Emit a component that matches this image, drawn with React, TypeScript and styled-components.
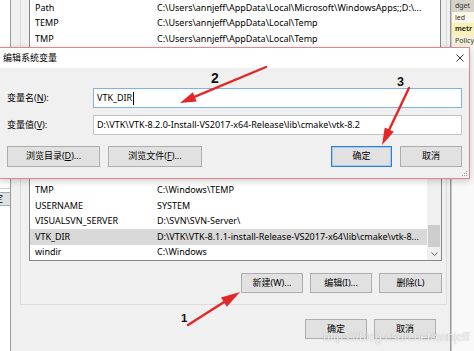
import React from "react";
import styled, { createGlobalStyle } from "styled-components";

const UI_FONT = `"Noto Sans", "Noto Sans CJK SC", sans-serif`;

const GlobalStyle = createGlobalStyle`
  * { box-sizing: border-box; }
  html, body { margin: 0; padding: 0; background: #f7f7f7; }
`;

const Desktop = styled.div`
  position: relative;
  width: 474px;
  height: 351px;
  overflow: hidden;
  background: #f7f7f7;
  font-family: ${UI_FONT};
  font-size: 9px;
  line-height: 1.2;
  color: #000;
`;

/* ---------- windows lying behind ---------- */

const LeftWindow = styled.div`
  position: absolute;
  top: 0;
  left: -60px;
  width: 74px;
  height: 351px;
  background: #fff;
  display: flex;
  flex-direction: column;
`;

const LeftFooter = styled.div`
  margin-top: 188px;
  border-top: 1px solid #d0d0d0;
  display: flex;
  justify-content: flex-end;
  padding: 3px 0 0;
`;

const PartButton = styled.div`
  width: 40px;
  height: 14px;
  background: #e1e1e1;
  border: 1px solid #adadad;
  display: flex;
  align-items: center;
  justify-content: center;
`;

const RightWindow = styled.div`
  position: absolute;
  top: 0;
  left: 451px;
  width: 30px;
  height: 351px;
  background: #f9f9f9;
  border-left: 1px solid #c8c8c8;
  display: flex;
  flex-direction: column;
`;

const PropLine = styled.div<{ $bg: string; $bold?: boolean }>`
  height: 11.5px;
  padding-left: 3px;
  background: ${(p) => p.$bg};
  font-size: 7px;
  line-height: 11.5px;
  font-weight: ${(p) => (p.$bold ? 700 : 400)};
  color: #333;
  white-space: nowrap;
`;

/* ---------- environment variables window ---------- */

const EnvWindow = styled.div`
  position: absolute;
  left: 10px;
  top: 0;
  width: 441px;
  height: 400px;
  background: #f0f0f0;
  border-left: 1px solid #9a9a9a;
  border-right: 1px solid #9a9a9a;
  display: flex;
  flex-direction: column;
`;

const GroupBox = styled.div<{ $open?: boolean }>`
  margin: ${(p) => (p.$open ? 0 : 17)}px 3px 0 9px;
  border: 1px solid #dcdcdc;
  border-top: ${(p) => (p.$open ? "none" : "1px solid #dcdcdc")};
  padding: ${(p) => (p.$open ? "0 4px 37px 8px" : "20px 4px 11px 8px")};
  display: flex;
  flex-direction: column;
`;

const VarList = styled.div<{ $h: number; $w?: string; $open?: boolean }>`
  height: ${(p) => p.$h}px;
  width: ${(p) => p.$w || "auto"};
  border: 1px solid #828790;
  border-top: ${(p) => (p.$open ? "none" : "1px solid #828790")};
  background: #fff;
  display: flex;
`;

const ListBody = styled.div`
  flex: 1;
  display: flex;
  flex-direction: column;
  min-width: 0;
`;

const ListHeader = styled.div`
  height: 20px;
  flex: none;
  border-bottom: 1px solid #e5e5e5;
`;

const Row = styled.div<{ $selected?: boolean }>`
  height: 15.5px;
  flex: none;
  display: flex;
  align-items: center;
  line-height: 12px;
  background: ${(p) => (p.$selected ? "#d9d9d9" : "transparent")};
  white-space: nowrap;
`;

const NameCell = styled.div`
  width: 127px;
  flex: none;
  padding-left: 5px;
`;

const ValueCell = styled.div`
  flex: 1;
`;

const ScrollBar = styled.div`
  width: 14px;
  flex: none;
  background: #f0f0f0;
  display: flex;
  flex-direction: column;
`;

const ScrollArrow = styled.div`
  height: 13px;
  flex: none;
  display: flex;
  align-items: center;
  justify-content: center;
`;

const ScrollTrack = styled.div`
  flex: 1;
  display: flex;
  flex-direction: column;
  justify-content: flex-end;
  padding: 0 1px;
`;

const Thumb = styled.div`
  height: 22px;
  background: #cdcdcd;
`;

const ButtonRow = styled.div<{ $top: number; $right?: number }>`
  display: flex;
  justify-content: flex-end;
  gap: 7px;
  margin-top: ${(p) => p.$top}px;
  padding-right: ${(p) => p.$right || 0}px;
`;

const Button = styled.div<{ $w: number; $h?: number; $default?: boolean }>`
  width: ${(p) => p.$w}px;
  height: ${(p) => p.$h || 20}px;
  flex: none;
  background: #e1e1e1;
  border: 1px solid ${(p) => (p.$default ? "#2b7fd5" : "#adadad")};
  box-shadow: ${(p) => (p.$default ? "inset 0 0 0 1px #a7c9ec" : "none")};
  display: flex;
  align-items: center;
  justify-content: center;
  white-space: nowrap;
`;

/* ---------- edit dialog ---------- */

const Dialog = styled.div`
  position: absolute;
  left: -1px;
  top: 47px;
  width: 471px;
  height: 132px;
  border: 1px solid #d98a8e;
  box-shadow: 0 2px 7px rgba(0, 0, 0, 0.2);
  background: #f0f0f0;
  display: flex;
  flex-direction: column;
`;

const TitleBar = styled.div`
  height: 20px;
  flex: none;
  background: #fff;
  display: flex;
  align-items: center;
  justify-content: space-between;
  padding: 0 5px 0 3px;
`;

const DialogBody = styled.div`
  flex: 1;
  padding: 20px 7px 0 7px;
  display: flex;
  flex-direction: column;
`;

const FieldRow = styled.div<{ $top?: number }>`
  display: flex;
  align-items: center;
  margin-top: ${(p) => p.$top || 0}px;
`;

const FieldLabel = styled.div`
  width: 86px;
  flex: none;
`;

const TextBox = styled.div<{ $focused?: boolean }>`
  flex: 1;
  height: 20px;
  background: #fff;
  border: 1px solid ${(p) => (p.$focused ? "#7fb2e5" : "#c4c4c4")};
  padding-left: 3px;
  display: flex;
  align-items: center;
  white-space: nowrap;
`;

const Caret = styled.span`
  width: 1px;
  height: 13px;
  margin-left: 1px;
  background: #000;
`;

const DialogButtons = styled.div`
  display: flex;
  justify-content: space-between;
  margin-top: 11px;
`;

const ButtonGroup = styled.div`
  display: flex;
  gap: 8px;
`;

const Grip = styled.svg`
  position: absolute;
  right: 1px;
  bottom: 1px;
`;

/* ---------- annotations ---------- */

const Overlay = styled.svg`
  position: absolute;
  left: 0;
  top: 0;
  pointer-events: none;
`;

const Mark = styled.span<{ $x: number; $y: number; $size: number }>`
  position: absolute;
  left: ${(p) => p.$x}px;
  top: ${(p) => p.$y}px;
  font-family: "Liberation Sans", Arial, sans-serif;
  font-weight: 700;
  font-size: ${(p) => p.$size}px;
  line-height: 1;
  color: #111;
`;

const Watermark = styled.span`
  position: absolute;
  left: 323px;
  top: 330px;
  font-family: "Liberation Sans", Arial, sans-serif;
  font-size: 12px;
  color: rgba(255, 255, 255, 0.85);
  text-shadow: 0 0 1px rgba(0, 0, 0, 0.35);
  white-space: nowrap;
`;

const Arrow: React.FC<{ x1: number; y1: number; x2: number; y2: number; len?: number; half?: number }> = ({
  x1,
  y1,
  x2,
  y2,
  len = 16,
  half = 5,
}) => {
  const dx = x2 - x1;
  const dy = y2 - y1;
  const d = Math.hypot(dx, dy);
  const ux = dx / d;
  const uy = dy / d;
  const bx = x2 - ux * len;
  const by = y2 - uy * len;
  const nx = -uy;
  const ny = ux;
  const pts = `${x2},${y2} ${bx + nx * half},${by + ny * half} ${bx - nx * half},${by - ny * half}`;
  return (
    <g>
      <line x1={x1} y1={y1} x2={bx + ux * 3} y2={by + uy * 3} stroke="#e32727" strokeWidth={2.4} strokeLinecap="round" />
      <polygon points={pts} fill="#e32727" />
    </g>
  );
};

// only the rows that show above the dialog
const userVars: [string, string][] = [
  ["Path", "C:\\Users\\annjeff\\AppData\\Local\\Microsoft\\WindowsApps;;D:\\..."],
  ["TEMP", "C:\\Users\\annjeff\\AppData\\Local\\Temp"],
  ["TMP", "C:\\Users\\annjeff\\AppData\\Local\\Temp"],
];

const sysVars: [string, string][] = [
  ["", ""],
  ["TMP", "C:\\Windows\\TEMP"],
  ["USERNAME", "SYSTEM"],
  ["VISUALSVN_SERVER", "D:\\SVN\\SVN-Server\\"],
  ["VTK_DIR", "D:\\VTK\\VTK-8.1.1-install-Release-VS2017-x64\\lib\\cmake\\vtk-8..."],
  ["windir", "C:\\Windows"],
];

export default function App() {
  return (
    <Desktop>
      <GlobalStyle />

      <LeftWindow>
        <LeftFooter>
          <PartButton>确定</PartButton>
        </LeftFooter>
      </LeftWindow>

      <RightWindow>
        <PropLine $bg="#d6d3c9">dget</PropLine>
        <PropLine $bg="#fbf8ea">led</PropLine>
        <PropLine $bg="#fbf1b4" $bold>metr</PropLine>
        <PropLine $bg="#f6f0d8">Policy</PropLine>
      </RightWindow>

      <EnvWindow>
        <GroupBox $open>
          <VarList $h={70} $w="412px" $open>
            <ListBody>
              {userVars.map(([n, v]) => (
                <Row key={n}>
                  <NameCell>{n}</NameCell>
                  <ValueCell>{v}</ValueCell>
                </Row>
              ))}
            </ListBody>
          </VarList>
        </GroupBox>

        <GroupBox>
          <VarList $h={115}>
            <ListBody>
              <ListHeader />
              {sysVars.map(([n, v], i) => (
                <Row key={i} $selected={n === "VTK_DIR"}>
                  <NameCell>{n}</NameCell>
                  <ValueCell>{v}</ValueCell>
                </Row>
              ))}
            </ListBody>
            <ScrollBar>
              <ScrollArrow>
                <svg width="7" height="4" viewBox="0 0 7 4">
                  <path d="M0.5 3.5 L3.5 0.5 L6.5 3.5" fill="none" stroke="#606060" strokeWidth="1" />
                </svg>
              </ScrollArrow>
              <ScrollTrack>
                <Thumb />
              </ScrollTrack>
              <ScrollArrow>
                <svg width="7" height="4" viewBox="0 0 7 4">
                  <path d="M0.5 0.5 L3.5 3.5 L6.5 0.5" fill="none" stroke="#606060" strokeWidth="1" />
                </svg>
              </ScrollArrow>
            </ScrollBar>
          </VarList>
          <ButtonRow $top={12}>
            <Button $w={62}>新建(W)...</Button>
            <Button $w={62}>编辑(I)...</Button>
            <Button $w={63}>删除(L)</Button>
          </ButtonRow>
        </GroupBox>

        <ButtonRow $top={14} $right={14}>
          <Button $w={62}>确定</Button>
          <Button $w={62}>取消</Button>
        </ButtonRow>
      </EnvWindow>

      <Dialog>
        <TitleBar>
          <span>编辑系统变量</span>
          <svg width="8" height="8" viewBox="0 0 8 8">
            <path d="M0.5 0.5 L7.5 7.5 M7.5 0.5 L0.5 7.5" stroke="#222" strokeWidth="0.9" />
          </svg>
        </TitleBar>
        <DialogBody>
          <FieldRow>
            <FieldLabel>
              变量名(<u>N</u>):
            </FieldLabel>
            <TextBox $focused>
              VTK_DIR
              <Caret />
            </TextBox>
          </FieldRow>
          <FieldRow $top={7}>
            <FieldLabel>
              变量值(<u>V</u>):
            </FieldLabel>
            <TextBox>D:\VTK\VTK-8.2.0-Install-VS2017-x64-Release\lib\cmake\vtk-8.2</TextBox>
          </FieldRow>
          <DialogButtons>
            <ButtonGroup>
              <Button $w={93} $h={21}>
                浏览目录(<u>D</u>)...
              </Button>
              <Button $w={94} $h={21}>
                浏览文件(<u>F</u>)...
              </Button>
            </ButtonGroup>
            <ButtonGroup>
              <Button $w={61} $h={21} $default>
                确定
              </Button>
              <Button $w={62} $h={21}>
                取消
              </Button>
            </ButtonGroup>
          </DialogButtons>
        </DialogBody>
        <Grip width="7" height="7" viewBox="0 0 7 7">
          <rect x="5" y="1" width="1" height="1" fill="#a0a0a0" />
          <rect x="3" y="3" width="1" height="1" fill="#a0a0a0" />
          <rect x="5" y="3" width="1" height="1" fill="#a0a0a0" />
          <rect x="1" y="5" width="1" height="1" fill="#a0a0a0" />
          <rect x="3" y="5" width="1" height="1" fill="#a0a0a0" />
          <rect x="5" y="5" width="1" height="1" fill="#a0a0a0" />
        </Grip>
      </Dialog>

      <Overlay width="474" height="351" viewBox="0 0 474 351">
        <Arrow x1={266} y1={67} x2={180} y2={103} len={16} half={5} />
        <Arrow x1={409} y1={88} x2={382} y2={145} len={17} half={5} />
        <Arrow x1={188} y1={325} x2={240} y2={292} len={19} half={5.5} />
      </Overlay>
      <Mark $x={211} $y={71} $size={14}>2</Mark>
      <Mark $x={397} $y={76} $size={12.5}>3</Mark>
      <Mark $x={181} $y={313} $size={11.5}>1</Mark>

      <Watermark>https://blog.csdn.net/annjeff</Watermark>
    </Desktop>
  );
}
